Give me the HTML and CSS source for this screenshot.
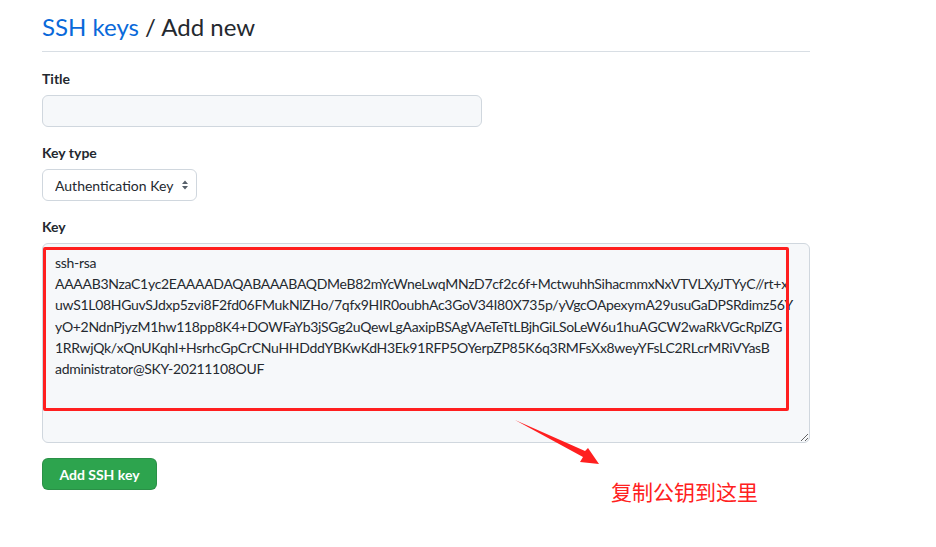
FILE: index.html
```html
<!DOCTYPE html>
<html>
<head>
    <link rel="stylesheet" href="styles.css">
</head>
<body>
    <div class="page">
        <div class="subhead">
            <h2 class="subhead-heading"><a href="#" class="crumb">SSH keys</a> / Add new</h2>
        </div>

        <form class="key-form">
            <div class="form-group">
                <label class="form-label" for="title">Title</label>
                <input class="form-control title-input" type="text" id="title">
            </div>

            <div class="form-group">
                <label class="form-label" for="keytype">Key type</label>
                <div class="select-wrap">
                    <select class="form-select" id="keytype">
                        <option>Authentication Key</option>
                        <option>Signing Key</option>
                    </select>
                    <svg class="select-caret" width="8" height="12" viewBox="0 0 8 12">
                        <path d="M4 1.5 L7 5 L1 5 Z M4 10.5 L7 7 L1 7 Z" fill="#57606a"/>
                    </svg>
                </div>
            </div>

            <div class="form-group">
                <label class="form-label" for="key">Key</label>
                <div class="key-wrap">
                    <textarea class="form-control key-input" id="key">ssh-rsa
AAAAB3NzaC1yc2EAAAADAQABAAABAQDMeB82mYcWneLwqMNzD7cf2c6f+MctwuhhSihacmmxNxVTVLXyJTYyC//rt+x
uwS1L08HGuvSJdxp5zvi8F2fd06FMukNlZHo/7qfx9HIR0oubhAc3GoV34I80X735p/yVgcOApexymA29usuGaDPSRdimz56Y
yO+2NdnPjyzM1hw118pp8K4+DOWFaYb3jSGg2uQewLgAaxipBSAgVAeTeTtLBjhGiLSoLeW6u1huAGCW2waRkVGcRplZG
1RRwjQk/xQnUKqhI+HsrhcGpCrCNuHHDddYBKwKdH3Ek91RFP5OYerpZP85K6q3RMFsXx8weyYFsLC2RLcrMRiVYasB
administrator@SKY-20211108OUF</textarea>
                    <!-- annotation: red box + arrow + note -->
                    <div class="mark-box"></div>
                    <svg class="mark-arrow" width="90" height="50" viewBox="0 0 90 50">
                        <polygon points="0,1 70,32 73,29 84,45 65,43 68,38" fill="#ff1f1f"/>
                    </svg>
                    <div class="mark-note">复制公钥到这里</div>
                </div>
            </div>

            <button type="button" class="btn-primary">Add SSH key</button>
        </form>
    </div>
</body>
</html>
```

FILE: styles.css
```css
body {
    margin: 0;
    background: #fff;
    color: #24292f;
    font-family: Lato, "Segoe UI", "Liberation Sans", sans-serif;
    font-size: 14px;
    line-height: 1.5;
}
.page {
    width: 768px;
    padding: 8px 0 60px 42px;
}
.subhead {
    border-bottom: 1px solid #d8dee4;
    padding: 1px 0 6px;
    margin-bottom: 16px;
}
.subhead-heading {
    margin: 0;
    font-size: 24px;
    font-weight: 400;
    line-height: 36px;
}
.crumb {
    color: #0969da;
    text-decoration: none;
}
.form-group {
    margin-bottom: 15px;
}
.form-label {
    display: block;
    font-weight: 700;
    margin-bottom: 6px;
}
.form-control {
    box-sizing: border-box;
    font: inherit;
    color: #24292f;
    background: #f6f8fa;
    border: 1px solid #d0d7de;
    border-radius: 6px;
    padding: 5px 12px;
}
.title-input {
    width: 440px;
    height: 32px;
}
.select-wrap {
    position: relative;
    display: inline-block;
}
.form-select {
    appearance: none;
    -webkit-appearance: none;
    box-sizing: border-box;
    height: 32px;
    width: 155px;
    font: inherit;
    color: #24292f;
    background: #fff;
    border: 1px solid #d0d7de;
    border-radius: 6px;
    padding: 5px 18px 5px 12px;
}
.select-caret {
    position: absolute;
    right: 8px;
    top: 10px;
    pointer-events: none;
}
.key-wrap {
    position: relative;
}
.key-input {
    display: block;
    width: 768px;
    height: 200px;
    padding: 8px 12px;
    line-height: 21.2px;
    letter-spacing: -0.3px;
    white-space: pre;
    overflow: hidden;
    resize: vertical;
}
.mark-box {
    position: absolute;
    left: 1px;
    top: 4px;
    width: 740px;
    height: 158px;
    border: 3px solid #ff1f1f;
    border-radius: 2px;
    pointer-events: none;
}
.mark-arrow {
    position: absolute;
    left: 473px;
    top: 176px;
}
.mark-note {
    position: absolute;
    left: 569px;
    top: 234px;
    color: #ff2020;
    font-family: "Noto Sans CJK SC", sans-serif;
    font-size: 21px;
    line-height: 28px;
    white-space: nowrap;
}
.btn-primary {
    height: 32px;
    width: 115px;
    padding: 0;
    white-space: nowrap;
    font: inherit;
    font-weight: 700;
    color: #fff;
    background: #2da44e;
    border: 1px solid rgba(27, 31, 36, 0.15);
    border-radius: 6px;
}
```
